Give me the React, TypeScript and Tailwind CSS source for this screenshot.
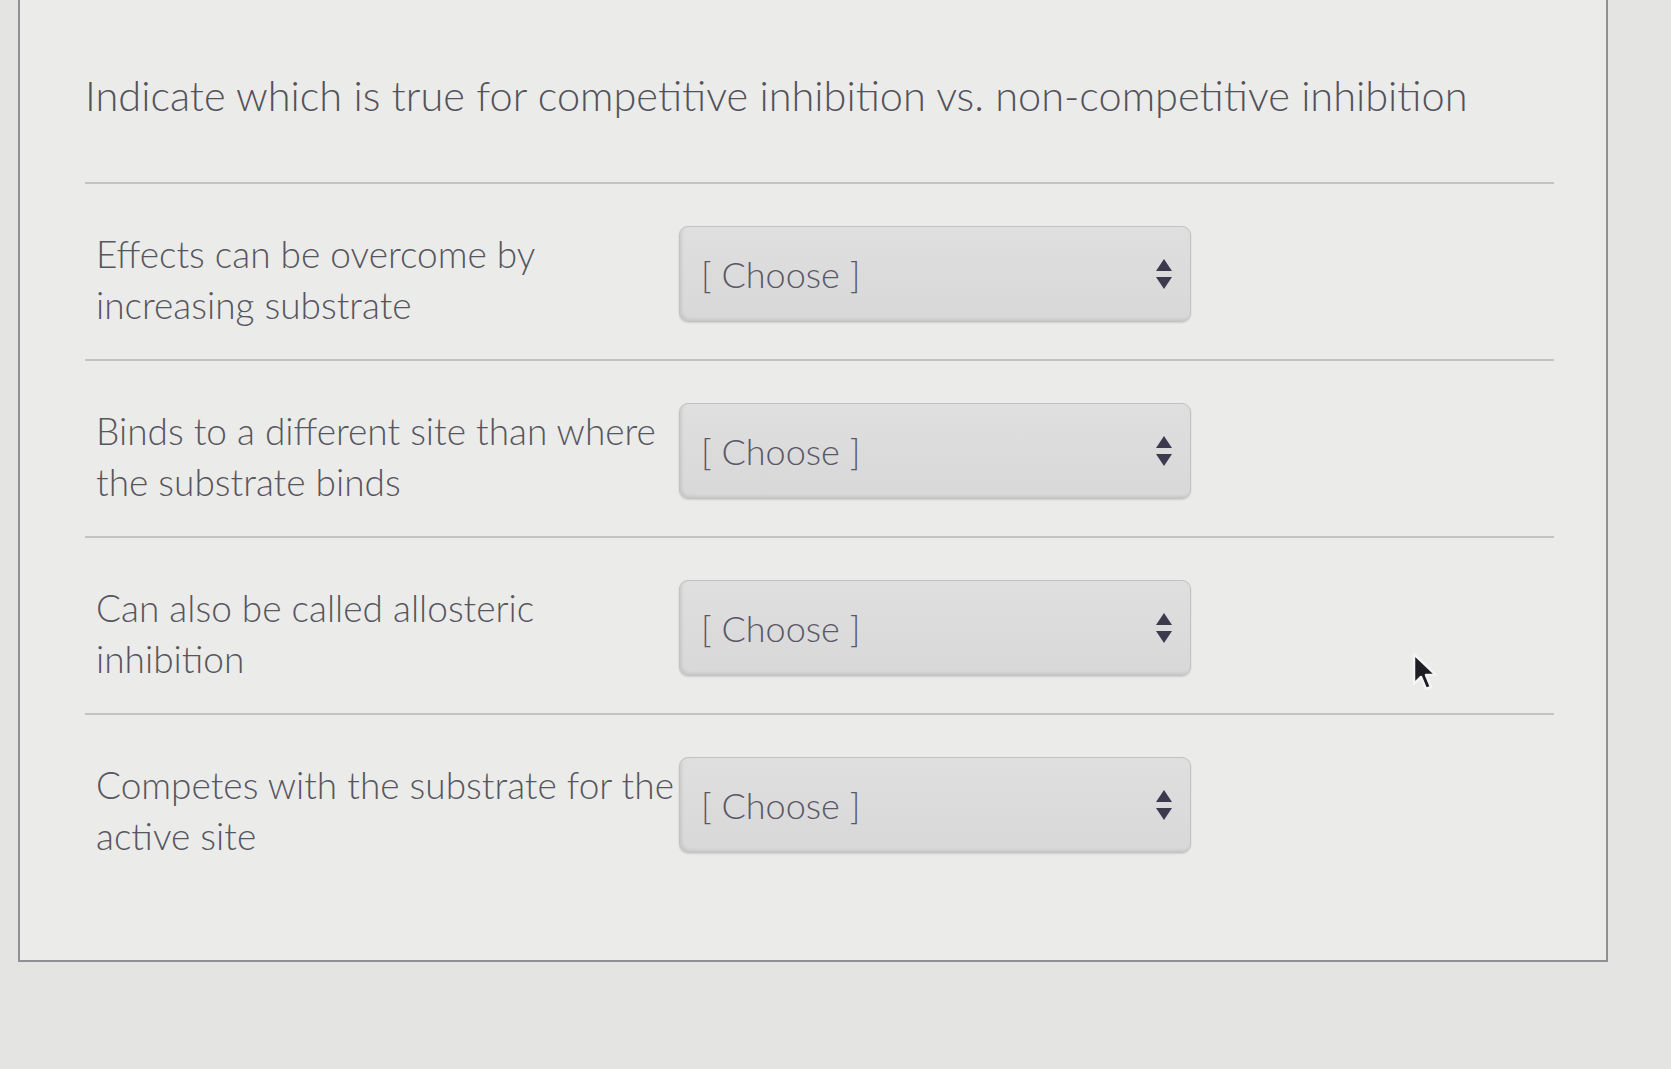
const rows = [
  ["Effects can be overcome by", "increasing substrate"],
  ["Binds to a different site than where", "the substrate binds"],
  ["Can also be called allosteric", "inhibition"],
  ["Competes with the substrate for the", "active site"],
];

function SortArrows() {
  return (
    <svg width="18" height="32" viewBox="0 0 18 32" className="shrink-0">
      <path d="M9 1 L17 13 L1 13 Z" fill="#3b3b4d" />
      <path d="M1 19 L17 19 L9 31 Z" fill="#3b3b4d" />
    </svg>
  );
}

function ChooseSelect() {
  return (
    <div className="flex h-[96px] w-[512px] shrink-0 items-center justify-between rounded-[9px] border border-[#c2c2c4] bg-gradient-to-b from-[#dfdfdf] to-[#d8d8d8] pl-[21px] pr-[17px] shadow-[inset_2px_-2px_3px_rgba(0,0,0,0.08),0_1px_2px_rgba(0,0,0,0.12)]">
      <span className="text-[36px] font-light text-[#5a5866]">[ Choose ]</span>
      <SortArrows />
    </div>
  );
}

function Cursor() {
  return (
    <svg
      width="34"
      height="44"
      viewBox="0 0 34 44"
      className="absolute left-[1411px] top-[652px]"
    >
      <path
        d="M3 2 L3 32 L10 25 L15 37 L20 35 L15 23 L25 23 Z"
        fill="#1e1e24"
        stroke="#f4f4f4"
        strokeWidth="2.5"
        strokeLinejoin="round"
      />
    </svg>
  );
}

export default function App() {
  return (
    <div
      className="relative h-[1069px] w-[1671px] overflow-hidden bg-[#e4e4e2]"
      style={{ fontFamily: "Lato, 'Open Sans', sans-serif" }}
    >
      <div className="ml-[18px] h-[962px] w-[1590px] border-x-2 border-b-2 border-[#8f8f96] bg-[#ebebea] pl-[65px] pr-[52px]">
        <h1 className="pt-[70px] pb-[62px] text-[41.5px] font-light leading-[50px] text-[#52525b]">
          Indicate which is true for competitive inhibition vs. non-competitive inhibition
        </h1>
        <div>
          {rows.map(([first, second]) => (
            <div
              key={first}
              className="flex items-start border-t-2 border-[#c3c3c4] pt-[42px] pb-[29px] pl-[11px]"
            >
              <p className="w-[583px] shrink-0 whitespace-nowrap pt-[2px] text-[37px] font-light leading-[51px] text-[#56565e]">
                {first}
                <br />
                {second}
              </p>
              <ChooseSelect />
            </div>
          ))}
        </div>
      </div>
      <Cursor />
    </div>
  );
}
